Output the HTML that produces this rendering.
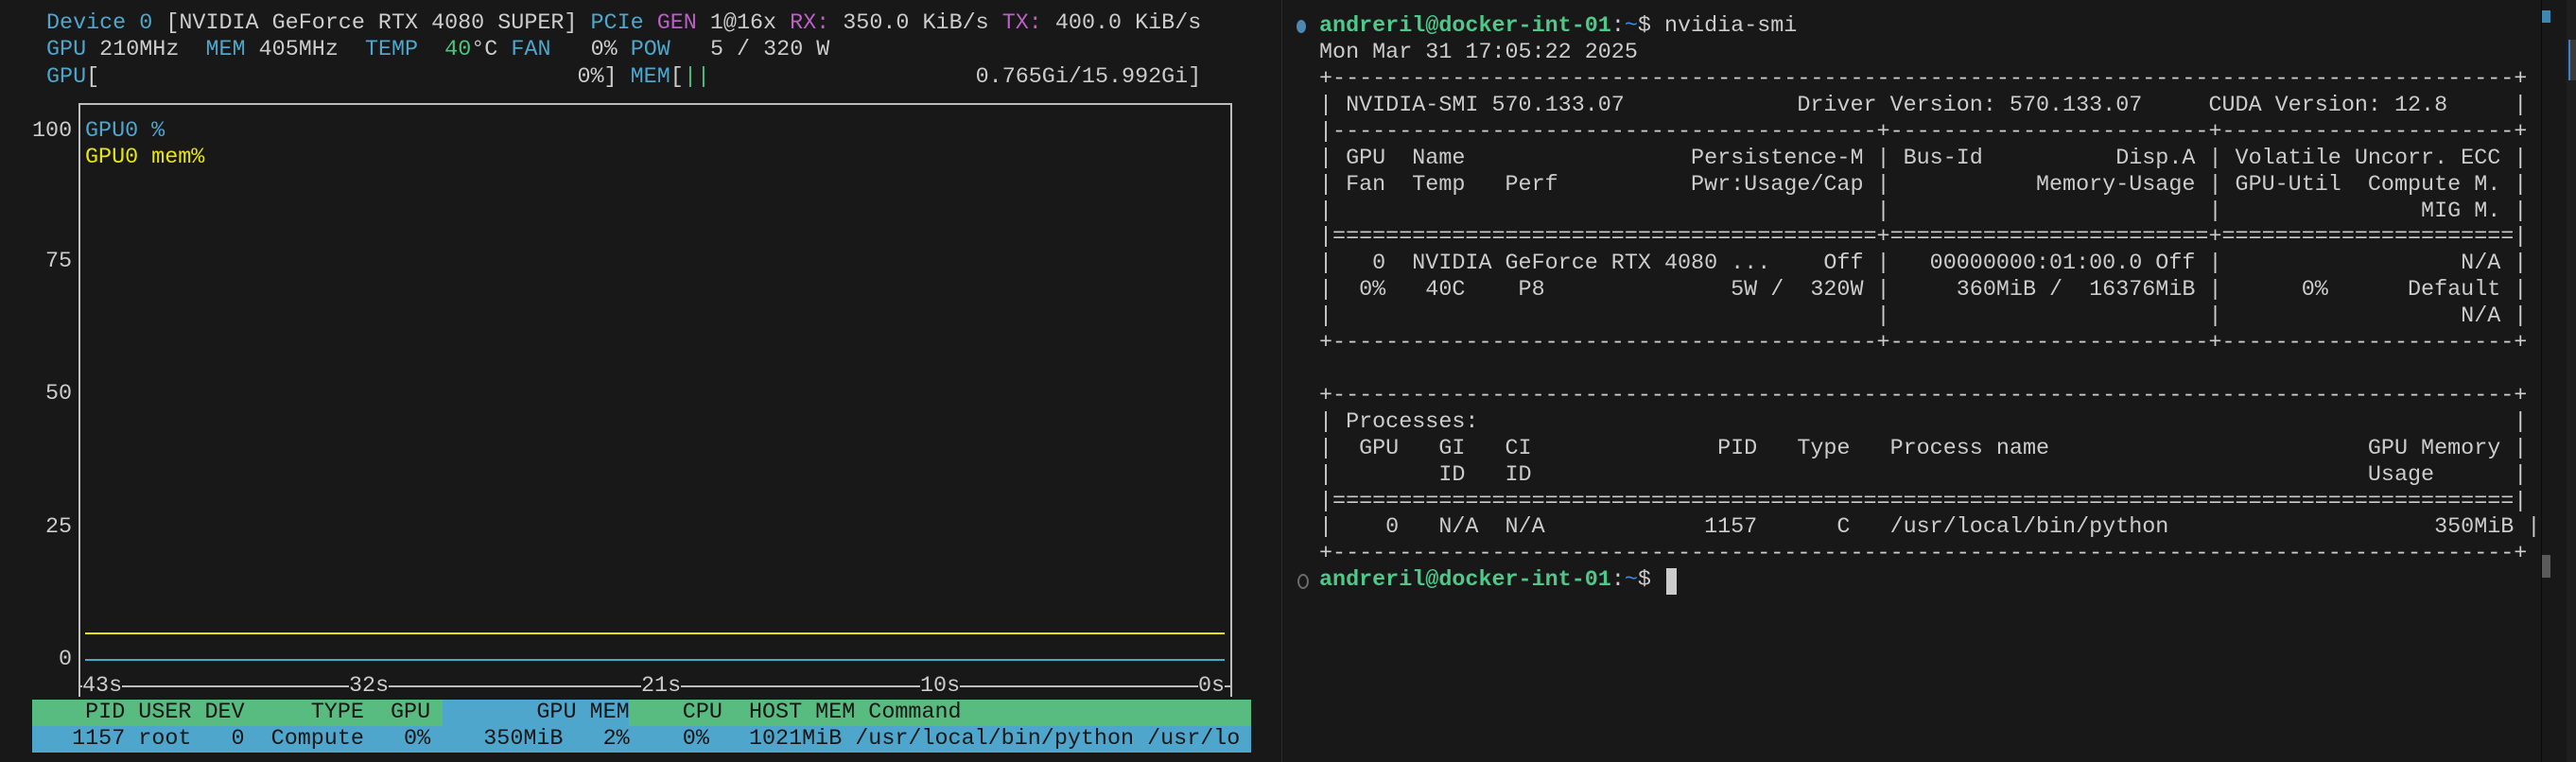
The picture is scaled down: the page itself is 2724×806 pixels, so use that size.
<!DOCTYPE html>
<html><head><meta charset="utf-8"><style>
html,body{margin:0;padding:0;background:#181818;width:2724px;height:806px;overflow:hidden;position:relative}
.t{position:absolute;white-space:pre;font-family:"Liberation Mono","DejaVu Sans Mono",monospace;font-size:23.4px;color:#cccccc}
.l{left:49px;line-height:28px;height:28px}
.r{left:1395px;line-height:27.9px;height:27.9px}
.c{color:#4ea6cc}.m{color:#bc5fc7}.g{color:#4fc47d}.y{color:#e5e510}
.pg{color:#4ec989;font-weight:bold}.tl{color:#3b8eea}
</style></head><body>
<div class="t l" style="top:11px"><span class="c">Device 0</span> [NVIDIA GeForce RTX 4080 SUPER] <span class="c">PCIe</span> <span class="m">GEN</span> 1@16x <span class="m">RX:</span> 350.0 KiB/s <span class="m">TX:</span> 400.0 KiB/s</div>
<div class="t l" style="top:39px"><span class="c">GPU</span> 210MHz  <span class="c">MEM</span> 405MHz  <span class="c">TEMP</span>  <span class="g">40</span>°C <span class="c">FAN</span>   0% <span class="c">POW</span>   5 / 320 W</div>
<div class="t l" style="top:68px"><span class="c">GPU</span>[                                    0%] <span class="c">MEM</span>[<span class="g">||</span>                    0.765Gi/15.992Gi]</div>

<div style="position:absolute;left:83px;top:109px;width:1219px;height:2px;background:#bdbdbd"></div>
<div style="position:absolute;left:83px;top:109px;width:2px;height:628px;background:#bdbdbd"></div>
<div style="position:absolute;left:1301px;top:109px;width:2px;height:628px;background:#bdbdbd"></div>
<div style="position:absolute;left:83px;top:725px;width:1220px;height:2px;background:#bdbdbd"></div>
<div style="position:absolute;left:90px;top:669px;width:1205px;height:2px;background:#e5e510"></div>
<div style="position:absolute;left:90px;top:697px;width:1205px;height:2px;background:#4ea6cc"></div>

<div class="t" style="left:34px;top:125px;line-height:28px">100</div>
<div class="t" style="left:48px;top:263px;line-height:28px">75</div>
<div class="t" style="left:48px;top:403px;line-height:28px">50</div>
<div class="t" style="left:48px;top:544px;line-height:28px">25</div>
<div class="t" style="left:62px;top:684px;line-height:28px">0</div>
<div class="t c" style="left:90px;top:125px;line-height:28px">GPU0 %</div>
<div class="t y" style="left:90px;top:153px;line-height:28px">GPU0 mem%</div>

<div class="t" style="left:87px;top:712px;line-height:28px;background:#181818">43s</div>
<div class="t" style="left:369px;top:712px;line-height:28px;background:#181818">32s</div>
<div class="t" style="left:678px;top:712px;line-height:28px;background:#181818">21s</div>
<div class="t" style="left:973px;top:712px;line-height:28px;background:#181818">10s</div>
<div class="t" style="left:1267px;top:712px;line-height:28px;background:#181818">0s</div>

<div style="position:absolute;left:34px;top:740px;width:1289px;height:28px;background:#58bb7f"></div>
<div style="position:absolute;left:468px;top:740px;width:197px;height:28px;background:#4fa6cc"></div>
<div style="position:absolute;left:34px;top:768px;width:1289px;height:28px;background:#4fa6cc"></div>
<div class="t" style="left:34px;top:740px;line-height:28px;color:#161616">    PID USER DEV     TYPE  GPU        GPU MEM    CPU  HOST MEM Command</div>
<div class="t" style="left:34px;top:768px;width:1289px;overflow:hidden;line-height:28px;color:#161616">   1157 root   0  Compute   0%    350MiB   2%    0%   1021MiB /usr/local/bin/python /usr/lo</div>

<div style="position:absolute;left:1355px;top:0;width:1px;height:806px;background:#2b2b2b"></div>

<div style="position:absolute;left:1371px;top:21px;width:10px;height:14px;border-radius:50%;background:#4d88b0"></div>
<div class="t r" style="top:15px"><span class="pg">andreril@docker-int-01</span>:<span class="tl">~</span>$ nvidia-smi</div>
<div class="t r" style="top:43px">Mon Mar 31 17:05:22 2025</div>
<div class="t r" style="top:71px;line-height:27.9px;height:auto">+-----------------------------------------------------------------------------------------+
| NVIDIA-SMI 570.133.07             Driver Version: 570.133.07     CUDA Version: 12.8     |
|-----------------------------------------+------------------------+----------------------+
| GPU  Name                 Persistence-M | Bus-Id          Disp.A | Volatile Uncorr. ECC |
| Fan  Temp   Perf          Pwr:Usage/Cap |           Memory-Usage | GPU-Util  Compute M. |
|                                         |                        |               MIG M. |
|=========================================+========================+======================|
|   0  NVIDIA GeForce RTX 4080 ...    Off |   00000000:01:00.0 Off |                  N/A |
|  0%   40C    P8              5W /  320W |     360MiB /  16376MiB |      0%      Default |
|                                         |                        |                  N/A |
+-----------------------------------------+------------------------+----------------------+
                                                                                         
+-----------------------------------------------------------------------------------------+
| Processes:                                                                              |
|  GPU   GI   CI              PID   Type   Process name                        GPU Memory |
|        ID   ID                                                               Usage      |
|=========================================================================================|
|    0   N/A  N/A            1157      C   /usr/local/bin/python                    350MiB |
+-----------------------------------------------------------------------------------------+</div>
<div style="position:absolute;left:1372px;top:607px;width:8px;height:12px;border-radius:50%;border:2px solid #6a6a6a"></div>
<div class="t r" style="top:601px"><span class="pg">andreril@docker-int-01</span>:<span class="tl">~</span>$ </div>
<div style="position:absolute;left:1762px;top:601px;width:11px;height:28px;background:#cccccc"></div>

<div style="position:absolute;left:2687px;top:0;width:1px;height:806px;background:#0a0a0a"></div>
<div style="position:absolute;left:2688px;top:11px;width:9px;height:13px;background:#3f86b0"></div>
<div style="position:absolute;left:2688px;top:587px;width:9px;height:24px;background:#5a5a5a"></div>
<div style="position:absolute;left:2714px;top:0;width:10px;height:806px;background:#1f1f1f"></div>
<div style="position:absolute;left:2716px;top:42px;width:2px;height:43px;background:#3b7fd0"></div>
<div style="position:absolute;left:2718px;top:42px;width:6px;height:43px;background:#3a3a3a"></div>
</body></html>
